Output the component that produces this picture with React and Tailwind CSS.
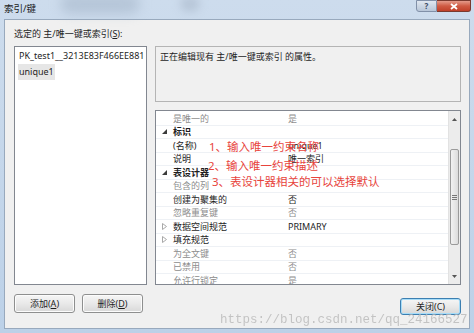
const rows = [
  { name: "是唯一的", value: "是", grey: true },
  { cat: "标识" },
  { name: "(名称)", value: "unique1" },
  { name: "说明", value: "唯一索引" },
  { cat: "表设计器" },
  { name: "包含的列", value: "", grey: true },
  { name: "创建为聚集的", value: "否" },
  { name: "忽略重复键", value: "否", grey: true },
  { name: "数据空间规范", value: "PRIMARY", expand: true },
  { name: "填充规范", value: "", expand: true },
  { name: "为全文键", value: "否", grey: true },
  { name: "已禁用", value: "否", grey: true },
  { name: "允许行锁定", value: "是", grey: true },
];

function WinButton({ children, primary }) {
  return (
    <button
      className={
        "w-[61px] rounded-[3px] border text-[9px] text-[#1e1e1e] bg-gradient-to-b from-[#f6f6f6] via-[#e9e9e9] to-[#d8d8d8] " +
        (primary
          ? "h-[17px] border-[#3c7fb1] shadow-[inset_0_0_0_1px_#a6dcf8]"
          : "h-[19px] border-[#8e8f8f] shadow-[inset_0_0_0_1px_#fcfcfc]")
      }
    >
      {children}
    </button>
  );
}

function PropertyGrid() {
  return (
    <div className="relative flex-1 min-h-0 flex border border-[#828790] bg-white">
      <div className="flex-1 pt-[1px] overflow-hidden">
        {rows.map((r, i) =>
          r.cat ? (
            <div key={i} className="h-[13.5px] flex items-center border-b border-[#eef1f5]">
              <div className="w-[17px] flex justify-center">
                <svg width="5" height="5" viewBox="0 0 5 5">
                  <path d="M5 0 L5 5 L0 5 Z" fill="#3b3b3b" />
                </svg>
              </div>
              <span className="font-bold text-[#1e1e1e]">{r.cat}</span>
            </div>
          ) : (
            <div key={i} className="h-[13.5px] flex items-center border-b border-[#eef1f5]">
              <div className="w-[17px] flex justify-center">
                {r.expand && (
                  <svg width="5" height="7" viewBox="0 0 5 7">
                    <path d="M0.5 0.5 L4.5 3.5 L0.5 6.5 Z" fill="none" stroke="#a9a9a9" strokeWidth="1" />
                  </svg>
                )}
              </div>
              <span className={"w-[115px] " + (r.grey ? "text-[#8d8d8d]" : "text-[#1e1e1e]")}>
                {r.name}
              </span>
              <span className={r.grey ? "text-[#8d8d8d]" : "text-[#1e1e1e]"}>{r.value}</span>
            </div>
          )
        )}
      </div>
      <div className="w-[12px] flex flex-col bg-[#ececec] border-l border-[#e2e2e2]">
        <div className="h-[16px] flex items-center justify-center">
          <svg width="5" height="3" viewBox="0 0 5 3">
            <path d="M2.5 0 L5 3 L0 3 Z" fill="#555" />
          </svg>
        </div>
        <div className="h-[22px]" />
        <div className="h-[96px] mx-[1px] rounded-[2px] border border-[#9a9a9a] bg-gradient-to-r from-[#f2f2f2] to-[#dcdcdc] flex flex-col items-center justify-center gap-[1px]">
          <div className="w-[5px] h-px bg-[#777]" />
          <div className="w-[5px] h-px bg-[#777]" />
          <div className="w-[5px] h-px bg-[#777]" />
        </div>
        <div className="flex-1" />
        <div className="h-[16px] flex items-center justify-center">
          <svg width="5" height="3" viewBox="0 0 5 3">
            <path d="M0 0 L5 0 L2.5 3 Z" fill="#555" />
          </svg>
        </div>
      </div>
      <div className="absolute left-[53px] top-[30px] text-[11.5px] leading-none text-[#e8443c] whitespace-nowrap">
        1、输入唯一约束名称
      </div>
      <div className="absolute left-[52px] top-[49px] text-[11.5px] leading-none text-[#e8443c] whitespace-nowrap">
        2、输入唯一约束描述
      </div>
      <div className="absolute left-[56px] top-[65px] text-[11.5px] leading-none text-[#e8443c] whitespace-nowrap">
        3、表设计器相关的可以选择默认
      </div>
    </div>
  );
}

export default function App() {
  return (
    <div
      className="relative w-[474px] h-[333px] overflow-hidden flex flex-col bg-gradient-to-b from-[#cddced] to-[#bcd1e8] text-[9px] text-[#1e1e1e]"
      style={{ fontFamily: '"Noto Sans", "Noto Sans CJK SC", sans-serif' }}
    >
      <div className="absolute left-[60px] top-[-6px] w-[80px] h-[20px] rounded-full bg-[#9fb0c4] opacity-50 blur-[6px]" />
      <div className="absolute left-[180px] top-[-4px] w-[20px] h-[16px] rounded-full bg-[#a4b3c5] opacity-50 blur-[4px]" />

      <div className="relative h-[19px] shrink-0 flex items-start">
        <span className="ml-[4px] mt-[2px] text-[9.5px] text-[#1b1b1b]">索引/键</span>
        <div className="ml-auto mr-[3px] flex">
          <div className="w-[21px] h-[12px] rounded-bl-[3px] border border-[#8190a8] bg-gradient-to-b from-[#e0e7f0] to-[#b8c6d8] flex items-center justify-center text-[8px] font-bold text-[#3c4c63] leading-none">
            ?
          </div>
          <div className="w-[34px] h-[12px] rounded-br-[3px] border border-l-0 border-[#7a3a2f] bg-gradient-to-b from-[#e49a8a] via-[#cf5a43] to-[#c04028] flex items-center justify-center">
            <svg width="8" height="7" viewBox="0 0 8 7">
              <path d="M1 1 L7 6 M7 1 L1 6" stroke="white" strokeWidth="1.8" />
            </svg>
          </div>
        </div>
      </div>

      <div className="mx-[4px] mb-[4px] flex-1 flex flex-col border border-[#98a9bd] bg-[#f0f0f0] pl-[9px] pr-[8px] pt-[8px]">
        <div className="h-[12px] shrink-0 leading-[12px]">
          选定的 主/唯一键或索引(<span className="underline">S</span>):
        </div>
        <div className="mt-[6px] h-[239px] shrink-0 flex gap-[8px]">
          <div className="w-[133px] border border-[#828790] bg-white pt-[1px] px-[3px]">
            <div className="h-[16px] leading-[16px] px-[1px]">PK_test1__3213E83F466EE881</div>
            <div className="h-[16px] leading-[16px] px-[1px] w-fit bg-[#e6e6e6]">unique1</div>
          </div>
          <div className="flex-1 min-h-0 flex flex-col gap-[8px]">
            <div className="h-[56px] shrink-0 border border-[#b4b4b4] bg-[#f0f0f0] px-[4px] pt-[3px]">
              正在编辑现有 主/唯一键或索引 的属性。
            </div>
            <PropertyGrid />
          </div>
        </div>
        <div className="mt-[9px] flex items-start">
          <div className="flex gap-[7px]">
            <WinButton>
              添加(<span className="underline">A</span>)
            </WinButton>
            <WinButton>
              删除(<span className="underline">D</span>)
            </WinButton>
          </div>
          <div className="ml-auto mt-[4px]">
            <WinButton primary>关闭(C)</WinButton>
          </div>
        </div>
      </div>

      <div
        className="absolute left-[220px] top-[314px] text-[12.5px] leading-none text-[#b9b9b9] opacity-80 whitespace-nowrap"
        style={{ fontFamily: '"Liberation Mono", monospace' }}
      >
        https://blog.csdn.net/qq_24166527
      </div>
    </div>
  );
}
